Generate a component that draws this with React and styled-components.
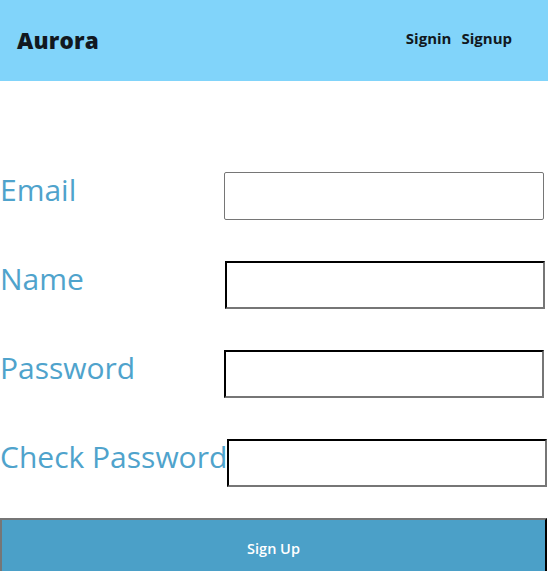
import React from "react";
import styled, { createGlobalStyle } from "styled-components";

const GlobalStyle = createGlobalStyle`
  * { box-sizing: border-box; }
  body {
    margin: 0;
    font-family: "Open Sans", "Noto Sans", sans-serif;
    background: #ffffff;
  }
`;

const Header = styled.header`
  height: 81px;
  background: #81d4fa;
  display: flex;
  align-items: center;
  justify-content: space-between;
  padding: 0 36px 0 17px;
`;

const Logo = styled.h1`
  margin: 0;
  font-family: "Open Sans", sans-serif;
  font-weight: 800;
  font-size: 22.5px;
  color: #111820;
  letter-spacing: 0.2px;
`;

const Nav = styled.nav`
  display: flex;
  gap: 10px;
  margin-top: -5px;
`;

const NavLink = styled.a`
  font-family: "Open Sans", sans-serif;
  font-weight: 700;
  font-size: 15px;
  color: #111820;
  text-decoration: none;
`;

const Form = styled.form`
  padding-top: 91px;
  display: flex;
  flex-direction: column;
`;

const Row = styled.div`
  display: flex;
  align-items: flex-start;
  margin-bottom: ${(p) => p.$gap || 41}px;
`;

const Label = styled.label`
  min-width: ${(p) => p.$width || 224}px;
  font-family: "Open Sans", sans-serif;
  font-size: 30px;
  line-height: 36px;
  margin-top: 0;
  color: #4fa3cc;
  white-space: nowrap;
`;

const Input = styled.input`
  width: 320px;
  height: 48px;
  margin: 0;
  background: #fff;
  border: ${(p) => (p.$plain ? "1px solid #767676" : "2px inset #767676")};
  border-top-color: ${(p) => (p.$plain ? "#767676" : "#1e1e1e")};
  border-left-color: ${(p) => (p.$plain ? "#767676" : "#1e1e1e")};
  border-radius: ${(p) => (p.$plain ? "2px" : "0")};
`;

const Submit = styled.button`
  width: 547px;
  height: 60px;
  margin: 0;
  margin-top: -2px;
  background: #4ba0c8;
  border: 2px outset #767676;
  border-right-color: #1e1e1e;
  color: #fff;
  font-family: "Open Sans", sans-serif;
  font-weight: 600;
  font-size: 14.5px;
  padding: 0;
`;

export default function App() {
  return (
    <>
      <GlobalStyle />
      <Header>
        <Logo>Aurora</Logo>
        <Nav>
          <NavLink href="#">Signin</NavLink>
          <NavLink href="#">Signup</NavLink>
        </Nav>
      </Header>
      <Form onSubmit={(e) => e.preventDefault()}>
        <Row>
          <Label>Email</Label>
          <Input $plain type="email" />
        </Row>
        <Row>
          <Label $width={225}>Name</Label>
          <Input type="text" />
        </Row>
        <Row>
          <Label>Password</Label>
          <Input type="password" />
        </Row>
        <Row $gap={33}>
          <Label $width={227}>Check Password</Label>
          <Input type="password" />
        </Row>
        <Submit type="submit">Sign Up</Submit>
      </Form>
    </>
  );
}
